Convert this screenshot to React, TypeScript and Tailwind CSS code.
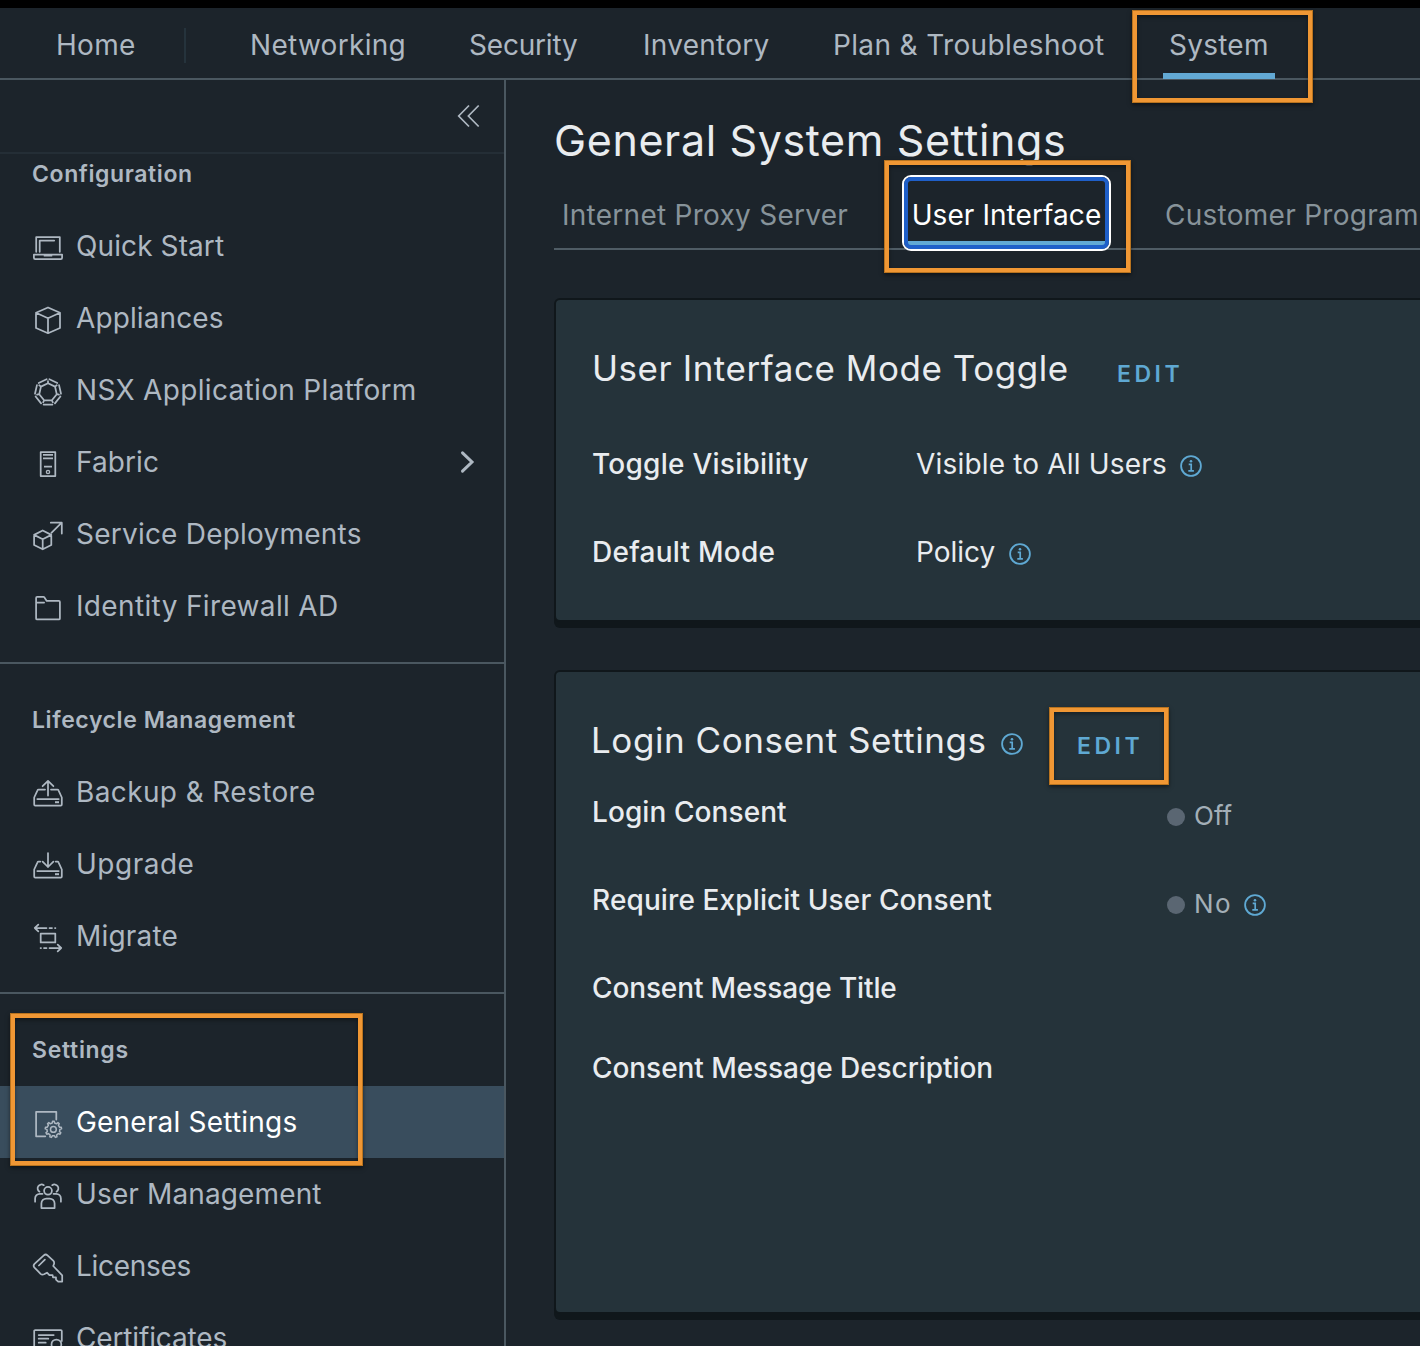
import React from 'react';
import type { ReactNode } from 'react';

const polar = (cx: number, cy: number, r: number, deg: number): [number, number] => {
  const a = ((deg - 90) * Math.PI) / 180;
  return [cx + r * Math.cos(a), cy + r * Math.sin(a)];
};

function Icon({ children }: { children: ReactNode }) {
  return (
    <svg
      className="mt-1 h-8 w-8 shrink-0"
      viewBox="0 0 32 32"
      fill="none"
      stroke="currentColor"
      strokeWidth="1.75"
      strokeLinejoin="round"
      strokeLinecap="round"
    >
      {children}
    </svg>
  );
}

const Laptop = () => (
  <Icon>
    <path d="M4.2 19.8V5h23.600v14.800M7.7 19.8V8.5h14.500" />
    <path d="M1.9 22.5h28.200v3.300a1.3 1.3 0 0 1-1.300 1.300H3.2a1.3 1.3 0 0 1-1.300-1.300z" />
    <path d="M12.500 23.7h7" />
  </Icon>
);

const Cube = () => (
  <Icon>
    <path d="M16 3.5 28 8.8V24L16 29.2 4 24V8.8zM4 8.8l12 5.400 12-5.400M16 14.2v15" />
  </Icon>
);

function Heptagon() {
  const c: [number, number] = [16, 16.2];
  const steps = [0, 1, 2, 3, 4, 5, 6].map((i) => (i * 360) / 7);
  const line = (a: [number, number], b: [number, number]) =>
    `M${a[0].toFixed(2)} ${a[1].toFixed(2)}L${b[0].toFixed(2)} ${b[1].toFixed(2)}`;
  const outer = steps
    .map((d) => {
      const a = polar(c[0], c[1], 13.7, d);
      const b = polar(c[0], c[1], 13.7, d + 360 / 7);
      const mix = (t: number): [number, number] => [a[0] + (b[0] - a[0]) * t, a[1] + (b[1] - a[1]) * t];
      return line(mix(0.13), mix(0.87));
    })
    .join('');
  const inner = steps.map((d) => line(polar(c[0], c[1], 9, d), polar(c[0], c[1], 9, d + 360 / 7))).join('');
  const spokes = steps.map((d) => line(polar(c[0], c[1], 9, d), polar(c[0], c[1], 11.2, d))).join('');
  return (
    <Icon>
      <path d={outer + inner + spokes} />
    </Icon>
  );
}

const Server = () => (
  <Icon>
    <path d="M8.7 4h14.600v24.100H8.7zM11 6.8h10M11 10.3h10M12 18.7h8" strokeLinecap="butt" />
    <circle cx="16" cy="24" r="1.6" strokeWidth="1.4" />
  </Icon>
);

const CubeOut = () => (
  <Icon>
    <path d="M10.700 10.500 19.300 14.900V25l-8.600 4.300L2.100 25V14.900zM2.100 14.900l8.600 4.300 8.600-4.300M10.700 19.200v10" />
    <path d="M19.400 12.900 29.700 2.700M18.800 2.700h11v10.800" />
  </Icon>
);

const Folder = () => (
  <Icon>
    <path d="M4.1 26.4V5.900a1 1 0 0 1 1-1h6.400a1 1 0 0 1 .8.4l2.400 3.600h12.200a1 1 0 0 1 1 1v16.500a1 1 0 0 1-1 1H5.1a1 1 0 0 1-1-1zM4.1 10.5h8" />
  </Icon>
);

function Tray({ up }: { up: boolean }) {
  return (
    <Icon>
      <path
        d={
          up
            ? 'M13 11.5H6.6a1.2 1.2 0 0 0-1.1.8L2.2 19.5v7.100a1 1 0 0 0 1 1h25.600a1 1 0 0 0 1-1v-7.100l-3.300-7.200a1.2 1.2 0 0 0-1.100-.8H19'
            : 'M8.3 11.5H6.6a1.2 1.2 0 0 0-1.1.8L2.2 19.5v7.100a1 1 0 0 0 1 1h25.600a1 1 0 0 0 1-1v-7.100l-3.300-7.200a1.2 1.2 0 0 0-1.100-.8h-1.700'
        }
      />
      <path d="M5.300 21h21.400" />
      <path d="M23 24.2h4" strokeWidth="2" strokeLinecap="butt" />
      <path d={up ? 'M16 17.6V3M10.6 8.2 16 2.9l5.400 5.300' : 'M16 3v14M10.6 11.7 16 17l5.400-5.300'} />
    </Icon>
  );
}

const Migrate = () => (
  <Icon>
    <path d="M14.5 6H2.8M6.3 2.700 2.8 6l3.500 3.300M17.5 6h2.500M23 6h.4M17.5 26h11.700M25.700 22.700l3.500 3.300-3.500 3.300M14.5 26H12M9 26h-.4" />
    <path d="M8.7 11.5h14.600v8.900H8.7z" />
  </Icon>
);

function PageGear() {
  const pts: string[] = [];
  for (let i = 0; i < 9; i++) {
    const d = i * 40;
    [[-10, 6.5], [-6, 8.2], [6, 8.2], [10, 6.5]].forEach(([o, r]) => {
      const p = polar(21.4, 21.4, r, d + o);
      pts.push(`${p[0].toFixed(2)} ${p[1].toFixed(2)}`);
    });
  }
  return (
    <Icon>
      <path d="M24.3 11.500V3.800H4.100v24.500h9.200" />
      <path d={`M${pts.join('L')}Z`} strokeWidth="1.5" />
      <circle cx="21.4" cy="21.4" r="2.9" strokeWidth="1.5" />
    </Icon>
  );
}

const Users = () => (
  <Icon>
    <circle cx="16" cy="10.8" r="3.9" />
    <path d="M9.4 28.1v-4.600a5 5 0 0 1 5-5h3.200a5 5 0 0 1 5 5v4.600z" />
    <path d="M11.8 5.2a3.9 3.9 0 1 0-4.300 6.500M20.2 5.2a3.9 3.9 0 1 1 4.300 6.500" />
    <path d="M3.1 21.7v-3.200a4.7 4.7 0 0 1 4.700-4.700h2.700M28.9 21.7v-3.200a4.7 4.7 0 0 0-4.700-4.700h-2.700" />
  </Icon>
);

const Key = () => (
  <Icon>
    <path d="M11.800 3.4a2.700 2.700 0 0 1 3.700 0l5.700 5.300c1 1 1.200 2.400.7 3.600l-.7 1.700 9 9.300v6.300h-4l-2.200-2v-2.200h-3l-.4-2.300h-3.200l-2.400-2.400-3 1.600a3 3 0 0 1-3.400-.5L2.500 15.600a2.700 2.700 0 0 1 0-3.700z" />
    <path d="M6.900 13.500 12.900 7.600" />
  </Icon>
);

const Certificate = () => (
  <Icon>
    <path d="M19 28H3.200a1 1 0 0 1-1-1V7a1 1 0 0 1 1-1h25.600a1 1 0 0 1 1 1v10M6.700 11h15M6.700 14.7h9.600M6.700 18.7h7" />
    <circle cx="24.4" cy="20.4" r="4.900" />
  </Icon>
);

function Info() {
  return (
    <svg className="h-[22px] w-[22px] shrink-0 text-[#5fa9d3]" viewBox="0 0 22 22" fill="none" stroke="currentColor" strokeWidth="1.8">
      <circle cx="11" cy="11" r="9.9" />
      <path d="M8.700 9.4h2.500v6.200M8.3 15.8h5.600" strokeWidth="1.7" />
      <circle cx="11" cy="6.2" r="1.3" fill="currentColor" stroke="none" />
    </svg>
  );
}

/* Orange annotation frame laid over the interface */
function Frame({ className }: { className: string }) {
  return (
    <div
      className={`pointer-events-none absolute z-10 border-[5px] border-[#f09734] shadow-[0_2px_4px_rgba(0,0,0,0.5),inset_0_2px_4px_rgba(0,0,0,0.4)] outline-1 -outline-offset-1 outline-[#b8731f] ${className}`}
    />
  );
}

type Item = { label: string; cls: string; icon: ReactNode; active?: boolean; more?: boolean };

const groups: { title: string; cls: string; items: Item[] }[] = [
  {
    title: 'Configuration',
    cls: 'tracking-[0.6px]',
    items: [
      { label: 'Quick Start', cls: 'tracking-[0.1px]', icon: <Laptop /> },
      { label: 'Appliances', cls: 'tracking-[0.1px]', icon: <Cube /> },
      { label: 'NSX Application Platform', cls: 'tracking-[0.33px]', icon: <Heptagon /> },
      { label: 'Fabric', cls: 'tracking-[0.1px]', icon: <Server />, more: true },
      { label: 'Service Deployments', cls: 'tracking-[0.22px]', icon: <CubeOut /> },
      { label: 'Identity Firewall AD', cls: 'tracking-[0.35px]', icon: <Folder /> },
    ],
  },
  {
    title: 'Lifecycle Management',
    cls: 'tracking-[0.58px]',
    items: [
      { label: 'Backup & Restore', cls: 'tracking-[0.38px]', icon: <Tray up /> },
      { label: 'Upgrade', cls: 'tracking-[0.5px]', icon: <Tray up={false} /> },
      { label: 'Migrate', cls: 'tracking-[0.2px]', icon: <Migrate /> },
    ],
  },
  {
    title: 'Settings',
    cls: 'tracking-[0.7px]',
    items: [
      { label: 'General Settings', cls: 'tracking-[0.2px]', icon: <PageGear />, active: true },
      { label: 'User Management', cls: 'tracking-[0.13px]', icon: <Users /> },
      { label: 'Licenses', cls: 'tracking-[-0.3px]', icon: <Key /> },
      { label: 'Certificates', cls: 'tracking-[-0.14px]', icon: <Certificate /> },
    ],
  },
];

function TopBar() {
  return (
    <header className="flex h-[80px] shrink-0 items-stretch border-t-8 border-b-2 border-t-black border-b-[#4a5760] text-[28px] whitespace-nowrap text-[#aeb8c2]">
      <nav className="flex h-[72px] items-center pt-[2px] pl-14">
        <a className="w-[128px] tracking-[0.3px]">Home</a>
        <span className="h-[35px] w-[2px] bg-[#25333c]" />
        <a className="ml-16 w-[219px] tracking-[0.3px]">Networking</a>
        <a className="w-[174px] tracking-[-0.2px]">Security</a>
        <a className="w-[190px] tracking-[0.27px]">Inventory</a>
        <a className="w-[330px] tracking-[0.35px]">Plan &amp; Troubleshoot</a>
        <a className="relative -mt-[2px] flex h-[71px] w-[112px] items-center self-start border-b-[6px] border-[#62a9d4] pt-[9px] pl-[6px] tracking-[0.25px]">
          System
          <Frame className="top-[2px] left-[-31px] h-[93px] w-[181px]" />
        </a>
      </nav>
    </header>
  );
}

function Sidebar() {
  return (
    <aside className="relative flex w-[506px] shrink-0 flex-col border-r-2 border-[#4a5760] text-[#aeb8c2]">
      <div className="flex h-[74px] shrink-0 items-center justify-end border-b-2 border-[#242e36] pr-[24px]">
        <svg className="h-6 w-6" viewBox="0 0 24 24" fill="none" stroke="currentColor" strokeWidth="1.7">
          <path d="M13 1.500 2.700 12 13 22.500M22.700 1.500 12.400 12l10.300 10.500" />
        </svg>
      </div>
      {groups.map((g, i) => (
        <section key={g.title} className={i === 0 ? 'shrink-0' : 'mt-5 shrink-0 border-t-2 border-[#4a5760] pt-5'}>
          <h2 className={`flex items-center pl-8 text-[23px] font-semibold ${i === 0 ? 'h-[56px] pb-4' : 'h-[72px]'} ${g.cls}`}>{g.title}</h2>
          {g.items.map((it) => (
            <a
              key={it.label}
              className={`flex h-[72px] items-center pl-8 text-[28px] whitespace-nowrap ${it.active ? 'bg-[#394d5d]' : ''}`}
            >
              {it.icon}
              <span className={`ml-3 ${it.active ? 'text-white' : ''} ${it.cls}`}>{it.label}</span>
              {it.more && (
                <svg className="mr-[27px] ml-auto h-6 w-[18px]" viewBox="0 0 18 24" fill="none" stroke="currentColor" strokeWidth="3" strokeLinecap="round">
                  <path d="M3.500 2.800 13 12l-9.500 9.200" />
                </svg>
              )}
            </a>
          ))}
        </section>
      ))}
      <Frame className="top-[933px] left-[10px] h-[153px] w-[353px]" />
    </aside>
  );
}

function Tabs() {
  return (
    <div className="mt-[13px] flex h-[72px] items-center border-b-2 border-[#4f5c65] pt-[3px] text-[28px] whitespace-nowrap text-[#87939a]">
      <span className="w-[354px] pl-2 tracking-[0.27px]">Internet Proxy Server</span>
      <span className="relative flex h-[64px] w-[197px] items-center justify-center self-start border-b-4 border-[#62a9d4] pt-[7px] tracking-[0.08px] text-white">
        User Interface
        <span className="absolute -inset-x-[6px] -top-[6px] -bottom-[10px] rounded-[9px] border-2 border-white">
          <span className="block h-full rounded-[7px] border-4 border-[#1f5fc8]" />
        </span>
        <Frame className="top-[-21px] left-[-24px] h-[113px] w-[247px]" />
      </span>
      <span className="ml-[60px] tracking-[0.27px]">Customer Program</span>
    </div>
  );
}

function Row({ label, cls, rowCls, children }: { label: string; cls: string; rowCls: string; children?: ReactNode }) {
  return (
    <div className={`flex items-center ${rowCls}`}>
      <span className={`shrink-0 pt-[2px] font-medium ${cls}`}>{label}</span>
      {children}
    </div>
  );
}

const cardCls =
  'mr-[-10px] shrink-0 rounded-[6px] border-2 border-[#10171b] bg-[#25333a] pl-[36px] text-[28px] whitespace-nowrap text-[#e9ecef] shadow-[0_6px_0_#10171b]';

function Status({ children }: { children: ReactNode }) {
  return (
    <span className="flex items-center pt-[8px] text-[26px] text-[#a3afb7]">
      <span className="mt-[3px] mr-[9px] h-[18px] w-[18px] rounded-full bg-[#5a6672]" />
      {children}
    </span>
  );
}

export default function App() {
  return (
    <div className="flex h-[1346px] w-[1420px] flex-col overflow-hidden bg-[#1c242b] font-['Inter',sans-serif]">
      <TopBar />
      <div className="flex min-h-0 flex-1">
        <Sidebar />
        <main className="flex min-w-0 flex-1 flex-col overflow-hidden pl-12">
          <h1 className="mt-[36px] flex h-[49px] items-center text-[43px] tracking-[0.62px] whitespace-nowrap text-[#e9ecef]">General System Settings</h1>
          <Tabs />

          <section className={`mt-[48px] h-[324px] pt-[44px] ${cardCls}`}>
            <div className="flex h-[48px] items-center">
              <h2 className="w-[525px] text-[35px] tracking-[0.55px]">User Interface Mode Toggle</h2>
              <a className="pt-[12px] text-[23px] font-semibold tracking-[3.5px] text-[#5fa9d3]">EDIT</a>
            </div>
            <Row label="Toggle Visibility" cls="w-[324px] tracking-[0.25px]" rowCls="mt-[27px] h-[88px]">
              <span className="mr-[13px] pt-[2px] tracking-[0.18px]">Visible to All Users</span>
              <span className="pt-[6px]"><Info /></span>
            </Row>
            <Row label="Default Mode" cls="w-[324px] tracking-[0.25px]" rowCls="h-[88px]">
              <span className="mr-[14px] pt-[2px]">Policy</span>
              <span className="pt-[6px]"><Info /></span>
            </Row>
          </section>

          <section className={`mt-[48px] h-[644px] pt-[44px] ${cardCls}`}>
            <div className="relative flex h-[48px] items-center">
              <h2 className="-ml-px w-[410px] text-[35px] tracking-[0.55px]">Login Consent Settings</h2>
              <span className="pt-[7px]"><Info /></span>
              <a className="ml-[54px] pt-[12px] text-[23px] font-semibold tracking-[3.5px] text-[#5fa9d3]">EDIT</a>
              <Frame className="top-[-9px] left-[457px] h-[78px] w-[120px]" />
            </div>
            <Row label="Login Consent" cls="w-[575px] tracking-[0.08px]" rowCls="mt-[3px] h-[88px]">
              <Status>Off</Status>
            </Row>
            <Row label="Require Explicit User Consent" cls="w-[575px] tracking-[0.12px]" rowCls="h-[88px]">
              <Status><span className="mr-[12px] tracking-[1.5px]">No</span></Status>
              <span className="pt-[11px]"><Info /></span>
            </Row>
            <Row label="Consent Message Title" cls="tracking-[-0.13px]" rowCls="h-[88px]" />
            <Row label="Consent Message Description" cls="tracking-[-0.06px]" rowCls="h-[72px]" />
          </section>
        </main>
      </div>
    </div>
  );
}
